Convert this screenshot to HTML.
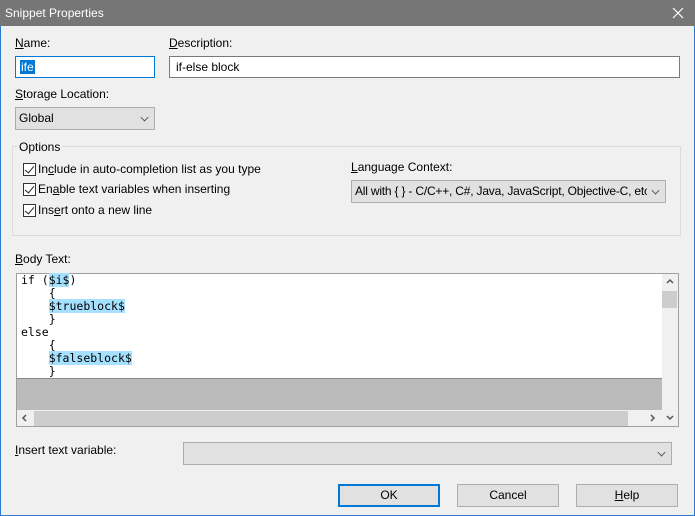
<!DOCTYPE html>
<html><head><style>
*{box-sizing:border-box;margin:0;padding:0}
body{width:695px;height:516px;background:#f0f0f0;font-family:"Liberation Sans",sans-serif;font-size:12px;color:#000;position:relative;overflow:hidden}
.a{position:absolute}
.win{left:0;top:0;width:695px;height:516px;border:1px solid #2b79d0;border-top:none}
.title{left:0;top:0;width:695px;height:26px;background:#767676;color:#fff;font-size:12px;line-height:26px;padding-left:5px}
.inp{background:#fff;border:1px solid #7a7a7a;line-height:20px;padding-left:6px}
.sel{background:#e1e1e1;border:1px solid #adadad;line-height:21px;padding-left:3px}
.chev{position:absolute;right:6px;top:6px;width:7px;height:7px;border-right:1px solid #444;border-bottom:1px solid #444;transform:rotate(45deg) scale(0.8)}
.cb{width:13px;height:13px;border:1px solid #333;background:#fff}
.cb:after{content:"";position:absolute;left:3px;top:0px;width:4px;height:8px;border-right:1px solid #222;border-bottom:1px solid #222;transform:rotate(40deg)}
.btn{background:#e1e1e1;border:1px solid #adadad;text-align:center;line-height:21px}
u{text-decoration:underline}
.code{font-family:"DejaVu Sans Mono","Liberation Mono",monospace;font-size:11.5px;line-height:13px;white-space:pre}
.hl{background:#a6e0ff}
</style></head><body>
<div class="a win"></div>
<div class="a title">Snippet Properties</div>
<svg class="a" style="left:672px;top:7px" width="12" height="12"><path d="M1 1L11 11M11 1L1 11" stroke="#fff" stroke-width="1.2"/></svg>

<div class="a" style="left:15px;top:36px"><u>N</u>ame:</div>
<div class="a inp" style="left:15px;top:56px;width:140px;height:22px;border-color:#0078d7;padding-left:4px"><span style="background:#0078d7;color:#fff;padding:0 1px">ife</span></div>
<div class="a" style="left:169px;top:36px"><u>D</u>escription:</div>
<div class="a inp" style="left:169px;top:56px;width:511px;height:22px">if-else block</div>
<div class="a" style="left:15px;top:87px"><u>S</u>torage Location:</div>
<div class="a sel" style="left:15px;top:107px;width:140px;height:23px">Global<span class="chev"></span></div>

<div class="a" style="left:12px;top:146px;width:669px;height:90px;border:1px solid #dcdcdc"></div>
<div class="a" style="left:17px;top:140px;background:#f0f0f0;padding:0 2px">Options</div>
<div class="a cb" style="left:23px;top:163px"></div><div class="a" style="left:38px;top:162px">In<u>c</u>lude in auto-completion list as you type</div>
<div class="a cb" style="left:23px;top:183px"></div><div class="a" style="left:38px;top:182px">En<u>a</u>ble text variables when inserting</div>
<div class="a cb" style="left:23px;top:204px"></div><div class="a" style="left:38px;top:203px">Ins<u>e</u>rt onto a new line</div>
<div class="a" style="left:351px;top:160px"><u>L</u>anguage Context:</div>
<div class="a sel" style="left:351px;top:180px;width:315px;height:23px"><span style="display:block;width:292px;overflow:hidden;white-space:nowrap;letter-spacing:-0.2px">All with { } - C/C++, C#, Java, JavaScript, Objective-C, etc.</span><span class="chev"></span></div>

<div class="a" style="left:15px;top:252px"><u>B</u>ody Text:</div>
<div class="a" style="left:16px;top:273px;width:663px;height:154px;border:1px solid #a0a0a0;background:#fff"></div>
<div class="a" style="left:17px;top:378px;width:645px;height:32px;background:#bbb;border-top:1px solid #888"></div>
<div class="a" style="left:17px;top:410px;width:645px;height:16px;background:#f0f0f0"></div>
<div class="a" style="left:34px;top:411px;height:15px;background:#cdcdcd;width:594px"></div>
<div class="a" style="left:662px;top:274px;width:16px;height:152px;background:#f0f0f0"></div>
<div class="a" style="left:662px;top:291px;width:15px;height:17px;background:#cdcdcd"></div>
<svg class="a" style="left:20px;top:412px" width="10" height="12"><path d="M6 3L3 6L6 9" stroke="#555" stroke-width="1.5" fill="none"/></svg>
<svg class="a" style="left:648px;top:412px" width="10" height="12"><path d="M3 3L6 6L3 9" stroke="#555" stroke-width="1.5" fill="none"/></svg>
<svg class="a" style="left:665px;top:277px" width="10" height="8"><path d="M2 6L5 3L8 6" stroke="#555" stroke-width="1.5" fill="none"/></svg>
<svg class="a" style="left:665px;top:414px" width="10" height="8"><path d="M2 2L5 5L8 2" stroke="#555" stroke-width="1.5" fill="none"/></svg>
<div class="a code" style="left:21px;top:274px">if (<span class="hl">$i$</span>)
    {
    <span class="hl">$trueblock$</span>
    }
else
    {
    <span class="hl">$falseblock$</span>
    }</div>

<div class="a" style="left:15px;top:443px"><u>I</u>nsert text variable:</div>
<div class="a sel" style="left:183px;top:442px;width:489px;height:23px"><span class="chev"></span></div>

<div class="a btn" style="left:338px;top:484px;width:102px;height:23px;border:2px solid #0078d7;line-height:19px">OK</div>
<div class="a btn" style="left:457px;top:484px;width:102px;height:23px">Cancel</div>
<div class="a btn" style="left:576px;top:484px;width:102px;height:23px"><u>H</u>elp</div>
</body></html>
